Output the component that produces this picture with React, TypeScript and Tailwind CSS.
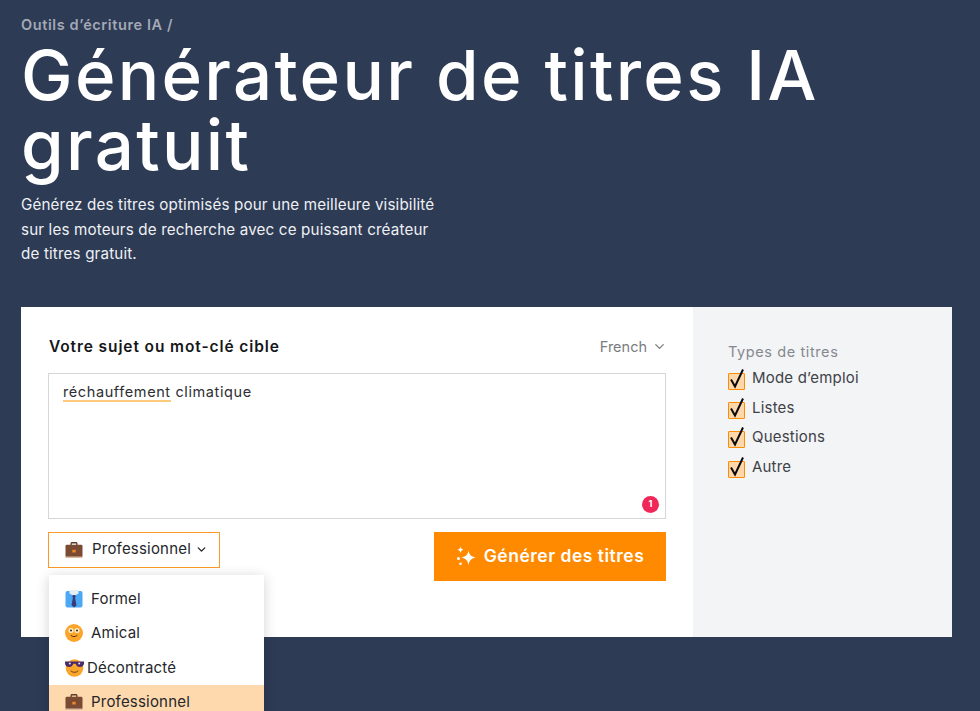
import React from 'react';
import { ChevronDown } from 'lucide-react';

const Briefcase = () => (
  <svg width="18" height="18" viewBox="0 0 18 18" className="shrink-0">
    <path d="M5.500 5V2.600C5.500 1.700 6.200 1 7.100 1h3.800c.9 0 1.600.7 1.600 1.600V5h-1.300V2.400H6.800V5z" fill="#5b3a29" />
    <rect x="0.500" y="3.800" width="17" height="12.700" rx="1.400" fill="#7a4a32" />
    <rect x="0.500" y="15.500" width="17" height="1.400" rx="0.600" fill="#d9b8a4" />
    <rect x="7.300" y="8.800" width="3.400" height="2.800" rx="0.400" fill="#e8872b" />
  </svg>
);

const Shirt = () => (
  <svg width="18" height="18" viewBox="0 0 18 18" className="shrink-0">
    <rect x="0.500" y="1" width="17" height="16.500" rx="2" fill="#4aa8f5" />
    <path d="M4.500 0h9v3.500L9 6 4.500 3.500z" fill="#e6edf3" />
    <path d="M7.800 5h2.400l.4 1.500-.5 1.500 1.400 7.500L9 17.500l-2.500-2.500L7.900 8l-.5-1.500z" fill="#3c3a78" />
  </svg>
);

const Smile = () => (
  <svg width="18" height="18" viewBox="0 0 18 18" className="shrink-0">
    <circle cx="9" cy="9" r="9" fill="#fba62a" />
    <circle cx="6" cy="6.500" r="2.500" fill="#fdf0d0" />
    <circle cx="12" cy="6.500" r="2.500" fill="#fdf0d0" />
    <circle cx="6" cy="6.500" r="1.100" fill="#4a3320" />
    <circle cx="12" cy="6.500" r="1.100" fill="#4a3320" />
    <path d="M6 11.500c1.500 1.600 4.500 1.600 6 0" stroke="#5b3a1c" strokeWidth="1" fill="none" strokeLinecap="round" />
  </svg>
);

const Cool = () => (
  <svg width="19" height="18" viewBox="0 0 19 18" className="shrink-0">
    <circle cx="9.500" cy="9" r="8.800" fill="#fba62a" />
    <path d="M0 2.500h19v1.800c0 2.200-1.800 3.700-4 3.700s-3.700-1.300-4.300-3.300H8.300C7.700 6.700 6.200 8 4 8S0 6.500 0 4.300z" fill="#4b2a6b" />
    <circle cx="4.800" cy="4.500" r="1" fill="#e9e2f2" />
    <circle cx="14.200" cy="4.500" r="1" fill="#e9e2f2" />
    <path d="M6 12c1.800 1.800 5.200 1.800 7 0" stroke="#5b3a1c" strokeWidth="1" fill="none" strokeLinecap="round" />
  </svg>
);

const Sparkles = () => (
  <svg width="20" height="20" viewBox="0 0 20 20" fill="#fff" className="shrink-0">
    <path d="M12.500 4.500c.7 4 2.500 6 7 7-4.500 1-6.300 3-7 8-.7-5-2.500-7-7-8 4.500-1 6.300-3 7-7z" />
    <path d="M4.500 0.500c.4 2 1.200 2.800 3 3.200-1.800.4-2.600 1.200-3 3.200-.4-2-1.200-2.800-3-3.200 1.800-.4 2.600-1.200 3-3.200z" />
    <circle cx="2.500" cy="12.500" r="1.500" />
    <circle cx="4.500" cy="17.800" r="1.300" />
  </svg>
);

const CheckRow = ({ label }: { label: string }) => (
  <label className="flex items-center gap-[7px] h-[29.400px] pt-[1px]">
    <span className="relative w-[17px] h-[17px] mt-[5px] border-[1.500px] border-[#ff8c00] bg-[#fed7aa] rounded-[1px]">
      <svg width="18" height="24" viewBox="0 0 18 24" className="absolute left-0 top-[-7px]">
        <path d="M2 12.500l4 7L14 2.500" stroke="#0b0b0b" strokeWidth="2" fill="none" />
      </svg>
    </span>
    <span className="text-[15px] tracking-[0.2px] text-[#3f4247]">{label}</span>
  </label>
);

const MenuItem = ({ icon, label, active, gap }: { icon: React.ReactNode; label: string; active?: boolean; gap: string }) => (
  <div className={`flex items-center h-[34.500px] pl-[16px] ${gap} ${active ? 'bg-[#fed9ae]' : ''}`}>
    {icon}
    <span className="text-[15px] text-[#25272b] tracking-[0.2px]">{label}</span>
  </div>
);

export default function App() {
  return (
    <div className="h-[711px] overflow-hidden bg-[#2d3b55] font-['Inter',sans-serif] px-[21px] pt-[16px]">
      <div className="text-[14.500px] leading-[18px] font-semibold tracking-[0.6px] text-[#a3a9b5]">Outils d’écriture IA /</div>
      <h1 className="mt-[6px] text-[69px] leading-[70px] font-medium text-white tracking-[2.300px]">
        Générateur de titres IA
        <br />
        gratuit
      </h1>
      <p className="mt-[13px] w-[420px] text-[15.200px] leading-[24.500px] tracking-[0.15px] text-[#eef0f3]">
        Générez des titres optimisés pour une meilleure visibilité sur les moteurs de recherche avec ce puissant créateur de titres gratuit.
      </p>

      <div className="mt-[40px] flex w-[931px] h-[330px]">
        <div className="relative w-[672px] bg-white px-[27px] pt-[30px]">
          <div className="flex items-center justify-between h-[20px]">
            <span className="ml-[1px] text-[15.500px] font-semibold text-[#15171a] tracking-[0.9px]">Votre sujet ou mot-clé cible</span>
            <span className="flex items-center gap-[5px] -mr-[1px] text-[14.500px] text-[#7a7d82]">
              French <ChevronDown size={15} strokeWidth={2} />
            </span>
          </div>
          <div className="relative mt-[16px] h-[146px] border border-[#d6d6d6] px-[14px] py-[7px] text-[14.500px] leading-[22px] tracking-[0.6px] text-[#2c2e33]">
            <span className="border-b-2 border-[#fcc97d]">réchauffement</span> climatique
            <span className="absolute right-[6px] bottom-[5px] flex items-center justify-center w-[17px] h-[17px] rounded-full bg-[#f0285a] text-[9px] font-bold tracking-normal text-white">1</span>
          </div>
          <div className="mt-[13px] flex items-start justify-between">
            <div className="flex items-center gap-[9px] w-[172px] h-[36px] pl-[16px] border border-[#fb9a28] text-[15px] text-[#25272b] tracking-[0.2px]">
              <Briefcase />
              <span>Professionnel</span>
              <ChevronDown size={13} strokeWidth={2.500} className="-ml-[5px]" />
            </div>
            <button className="flex items-center justify-center gap-[8px] w-[232px] h-[49px] bg-[#ff8a00] text-[17.500px] font-semibold tracking-[0.5px] text-white">
              <Sparkles />
              Générer des titres
            </button>
          </div>
          <div className="absolute left-[28px] top-[268px] w-[215px] bg-white pt-[7px] shadow-[0_2px_12px_rgba(0,0,0,0.18)]">
            <MenuItem icon={<Shirt />} label="Formel" gap="gap-[8px]" />
            <MenuItem icon={<Smile />} label="Amical" gap="gap-[8px]" />
            <MenuItem icon={<Cool />} label="Décontracté" gap="gap-[3px]" />
            <MenuItem icon={<Briefcase />} label="Professionnel" active gap="gap-[8px]" />
            <div className="h-[40px]" />
          </div>
        </div>
        <div className="flex-1 bg-[#f3f4f6] pl-[35px] pt-[36px]">
          <div className="text-[14.500px] leading-[18px] tracking-[0.6px] text-[#85888e] mb-[3px]">Types de titres</div>
          <CheckRow label="Mode d’emploi" />
          <CheckRow label="Listes" />
          <CheckRow label="Questions" />
          <CheckRow label="Autre" />
        </div>
      </div>
    </div>
  );
}
